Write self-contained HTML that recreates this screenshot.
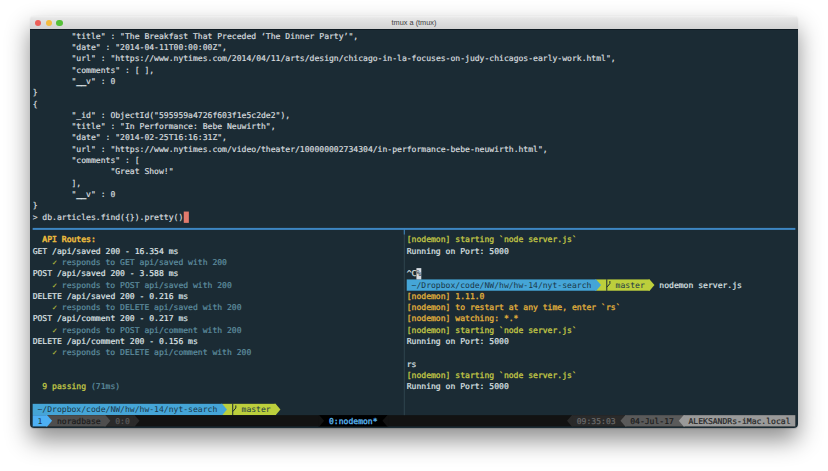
<!DOCTYPE html>
<html><head><meta charset="utf-8"><title>tmux a (tmux)</title>
<style>
html,body{margin:0;padding:0;background:#fff;}
body{width:828px;height:471px;position:relative;overflow:hidden;}
#win{position:absolute;left:30.4px;top:15.8px;width:767.6px;height:412.2px;border-radius:4px;
 background:linear-gradient(#f1f1f1 0,#e6e6e6 2px,#d3d3d3 12.8px,#0f1a21 12.9px,#0f1a21 13.7px,#1b2b34 13.8px);
 box-shadow:0 0.8px 1px rgba(0,0,0,.14),0 12px 24px rgba(0,0,0,.45);}
#tt{position:absolute;left:0;top:15.8px;width:828px;height:13.3px;line-height:13.6px;text-align:center;
 font-family:"Liberation Sans",sans-serif;font-size:7.35px;color:#404040;}
.dot{position:absolute;top:19.7px;width:6.3px;height:6.3px;border-radius:50%;}
#sh{position:absolute;left:0;top:0;display:block;}
.r{position:absolute;white-space:pre;font-family:"DejaVu Sans Mono","Liberation Mono",monospace;font-size:8.07px;line-height:11.31px;height:11.31px;
 color:#d6dbdf;letter-spacing:0.0045px;-webkit-text-stroke:0.2px;text-rendering:geometricPrecision;}
.w{color:#dfe3e6}.y{color:#e6b83e;-webkit-text-stroke:0.55px}.g{color:#c2c746;-webkit-text-stroke:0.3px}.d{color:#5f8fa0}.c{display:inline-block;width:4.858px;font-size:7.8px;text-align:center;color:#aeb63c;letter-spacing:0;-webkit-text-stroke:0.15px}
.n{color:#e2b23c;-webkit-text-stroke:0.3px}.k{color:#1a3646;-webkit-text-stroke:0}
.u{color:#dfe3e6;-webkit-text-stroke:0.7px}.s1{color:#1c1c1c}.s2{color:#5c5c5c}.s3{color:#6c6c6c}.s4{color:#262626}.sb{color:#5ab5ee;-webkit-text-stroke:0.35px}
</style></head><body>
<div id="win"></div>
<div class="dot" style="left:34.75px;background:#ee5f57"></div>
<div class="dot" style="left:45.55px;background:#f5bd3f"></div>
<div class="dot" style="left:56.35px;background:#55c038"></div>
<div id="tt">tmux a (tmux)</div>
<svg id="sh" width="828" height="471" viewBox="0 0 828 471">
<rect x="406.72" y="279.42" width="189.46" height="11.31" fill="#45a5d7"/>
<rect x="596.18" y="279.42" width="53.44" height="11.31" fill="#bccf3c"/>
<polygon points="595.18,279.42 596.18,279.42 601.04,285.07 596.18,290.73 595.18,290.73" fill="#45a5d7"/>
<polygon points="648.62,279.42 649.62,279.42 654.47,285.07 649.62,290.73 648.62,290.73" fill="#bccf3c"/>
<path d="M606.79 279.22v11.6M609.89 281.02v2.6l-3.1 3.6" stroke="#1b2b34" stroke-width="1" fill="none"/>
<rect x="32.65" y="403.83" width="189.46" height="11.31" fill="#45a5d7"/>
<rect x="222.11" y="403.83" width="53.44" height="11.31" fill="#bccf3c"/>
<polygon points="221.11,403.83 222.11,403.83 226.97,409.49 222.11,415.14 221.11,415.14" fill="#45a5d7"/>
<polygon points="274.55,403.83 275.55,403.83 280.41,409.49 275.55,415.14 274.55,415.14" fill="#bccf3c"/>
<path d="M232.73 403.63v11.6M235.83 405.43v2.6l-3.1 3.6" stroke="#1b2b34" stroke-width="1" fill="none"/>
<rect x="416.43" y="268.11" width="4.86" height="11.31" fill="#d8dee4"/>
<rect x="183.75" y="211.56" width="5.1" height="11.31" fill="#e27a6c"/>
<rect x="32.65" y="415.14" width="762.71" height="11.31" fill="#121212"/>
<rect x="32.65" y="415.14" width="14.57" height="11.31" fill="#4db0f4"/>
<rect x="47.22" y="415.14" width="58.3" height="11.31" fill="#4e4e4e"/>
<polygon points="46.22,415.14 47.22,415.14 52.08,420.8 47.22,426.45 46.22,426.45" fill="#4db0f4"/>
<rect x="105.52" y="415.14" width="29.15" height="11.31" fill="#2a2a2a"/>
<polygon points="104.52,415.14 105.52,415.14 110.38,420.8 105.52,426.45 104.52,426.45" fill="#4e4e4e"/>
<polygon points="133.67,415.14 134.67,415.14 139.53,420.8 134.67,426.45 133.67,426.45" fill="#2a2a2a"/>
<rect x="319.27" y="415.14" width="68.01" height="11.31" fill="#000"/>
<polygon points="318.27,415.14 319.27,415.14 324.13,420.8 319.27,426.45 318.27,426.45" fill="#121212"/>
<polygon points="388.28,415.14 387.28,415.14 382.43,420.8 387.28,426.45 388.28,426.45" fill="#121212"/>
<rect x="571.89" y="415.14" width="53.44" height="11.31" fill="#2a2a2a"/>
<polygon points="572.89,415.14 571.89,415.14 567.03,420.8 571.89,426.45 572.89,426.45" fill="#2a2a2a"/>
<rect x="625.33" y="415.14" width="58.3" height="11.31" fill="#5a5a5a"/>
<polygon points="626.33,415.14 625.33,415.14 620.47,420.8 625.33,426.45 626.33,426.45" fill="#5a5a5a"/>
<rect x="683.62" y="415.14" width="111.73" height="11.31" fill="#9a9a9a"/>
<polygon points="684.62,415.14 683.62,415.14 678.76,420.8 683.62,426.45 684.62,426.45" fill="#9a9a9a"/>
<rect x="403.79" y="228.9" width="1" height="186.24" fill="#2f454f"/>
<rect x="32.65" y="227.9" width="762.71" height="2" fill="#3d86c2"/>
<rect x="403.79" y="228.9" width="1" height="5.6" fill="#3d86c2"/>
</svg>
<div class="r" style="left:32.65px;top:30.7px">        "title" : "The Breakfast That Preceded ‘The Dinner Party’",</div>
<div class="r" style="left:32.65px;top:42.01px">        "date" : "2014-04-11T00:00:00Z",</div>
<div class="r" style="left:32.65px;top:53.32px">        "url" : "https://www.nytimes.com/2014/04/11/arts/design/chicago-in-la-focuses-on-judy-chicagos-early-work.html",</div>
<div class="r" style="left:32.65px;top:64.63px">        "comments" : [ ],</div>
<div class="r" style="left:32.65px;top:75.94px">        "<span class="u">__</span>v" : 0</div>
<div class="r" style="left:32.65px;top:87.25px">}</div>
<div class="r" style="left:32.65px;top:98.56px">{</div>
<div class="r" style="left:32.65px;top:109.87px">        "_id" : ObjectId("595959a4726f603f1e5c2de2"),</div>
<div class="r" style="left:32.65px;top:121.18px">        "title" : "In Performance: Bebe Neuwirth",</div>
<div class="r" style="left:32.65px;top:132.49px">        "date" : "2014-02-25T16:16:31Z",</div>
<div class="r" style="left:32.65px;top:143.8px">        "url" : "https://www.nytimes.com/video/theater/100000002734304/in-performance-bebe-neuwirth.html",</div>
<div class="r" style="left:32.65px;top:155.11px">        "comments" : [</div>
<div class="r" style="left:32.65px;top:166.42px">                "Great Show!"</div>
<div class="r" style="left:32.65px;top:177.73px">        ],</div>
<div class="r" style="left:32.65px;top:189.04px">        "<span class="u">__</span>v" : 0</div>
<div class="r" style="left:32.65px;top:200.35px">}</div>
<div class="r" style="left:32.65px;top:211.66px">&gt; db.articles.find({}).pretty()</div>
<div class="r" style="left:32.65px;top:234.28px"><span class="y">  API Routes:</span></div>
<div class="r" style="left:32.65px;top:245.59px"><span class="w">GET /api/saved 200 - 16.354 ms</span></div>
<div class="r" style="left:32.65px;top:256.9px">    <span class="c">✓</span><span class="d"> responds to GET api/saved with 200</span></div>
<div class="r" style="left:32.65px;top:268.21px"><span class="w">POST /api/saved 200 - 3.588 ms</span></div>
<div class="r" style="left:32.65px;top:279.52px">    <span class="c">✓</span><span class="d"> responds to POST api/saved with 200</span></div>
<div class="r" style="left:32.65px;top:290.83px"><span class="w">DELETE /api/saved 200 - 0.216 ms</span></div>
<div class="r" style="left:32.65px;top:302.14px">    <span class="c">✓</span><span class="d"> responds to DELETE api/saved with 200</span></div>
<div class="r" style="left:32.65px;top:313.45px"><span class="w">POST /api/comment 200 - 0.217 ms</span></div>
<div class="r" style="left:32.65px;top:324.76px">    <span class="c">✓</span><span class="d"> responds to POST api/comment with 200</span></div>
<div class="r" style="left:32.65px;top:336.07px"><span class="w">DELETE /api/comment 200 - 0.156 ms</span></div>
<div class="r" style="left:32.65px;top:347.38px">    <span class="c">✓</span><span class="d"> responds to DELETE api/comment with 200</span></div>
<div class="r" style="left:32.65px;top:381.31px"><span class="g">  9 passing</span><span class="d"> (71ms)</span></div>
<div class="r" style="left:406.72px;top:234.28px"><span class="g">[nodemon] starting `node server.js`</span></div>
<div class="r" style="left:406.72px;top:245.59px"><span class="w">Running on Port: 5000</span></div>
<div class="r" style="left:406.72px;top:268.21px"><span class="w">^C</span></div>
<div class="r" style="left:406.72px;top:290.83px"><span class="n">[nodemon] 1.11.0</span></div>
<div class="r" style="left:406.72px;top:302.14px"><span class="n">[nodemon] to restart at any time, enter `rs`</span></div>
<div class="r" style="left:406.72px;top:313.45px"><span class="n">[nodemon] watching: *.*</span></div>
<div class="r" style="left:406.72px;top:324.76px"><span class="g">[nodemon] starting `node server.js`</span></div>
<div class="r" style="left:406.72px;top:336.07px"><span class="w">Running on Port: 5000</span></div>
<div class="r" style="left:406.72px;top:358.69px"><span class="w">rs</span></div>
<div class="r" style="left:406.72px;top:370px"><span class="g">[nodemon] starting `node server.js`</span></div>
<div class="r" style="left:406.72px;top:381.31px"><span class="w">Running on Port: 5000</span></div>
<div class="r" style="left:406.72px;top:279.52px"><span class="k"> ~/Dropbox/code/NW/hw/hw-14/nyt-search </span></div>
<div class="r" style="left:615.61px;top:279.52px"><span class="k">master</span></div>
<div class="r" style="left:659.33px;top:279.52px"><span class="w">nodemon server.js</span></div>
<div class="r" style="left:32.65px;top:403.93px"><span class="k"> ~/Dropbox/code/NW/hw/hw-14/nyt-search </span></div>
<div class="r" style="left:241.54px;top:403.93px"><span class="k">master</span></div>
<div class="r" style="left:416.43px;top:268.21px"><span class="k">%</span></div>
<div class="r" style="left:32.65px;top:415.74px"><span class="k"> 1 </span></div>
<div class="r" style="left:56.94px;top:415.74px"><span class="s1">noradbase</span></div>
<div class="r" style="left:115.24px;top:415.74px"><span class="s2">0:0</span></div>
<div class="r" style="left:328.99px;top:415.74px"><span class="sb">0:nodemon*</span></div>
<div class="r" style="left:576.75px;top:415.74px"><span class="s3">09:35:03</span></div>
<div class="r" style="left:630.18px;top:415.74px"><span class="s1">04-Jul-17</span></div>
<div class="r" style="left:688.48px;top:415.74px"><span class="s4">ALEKSANDRs-iMac.local</span></div>

</body></html>
